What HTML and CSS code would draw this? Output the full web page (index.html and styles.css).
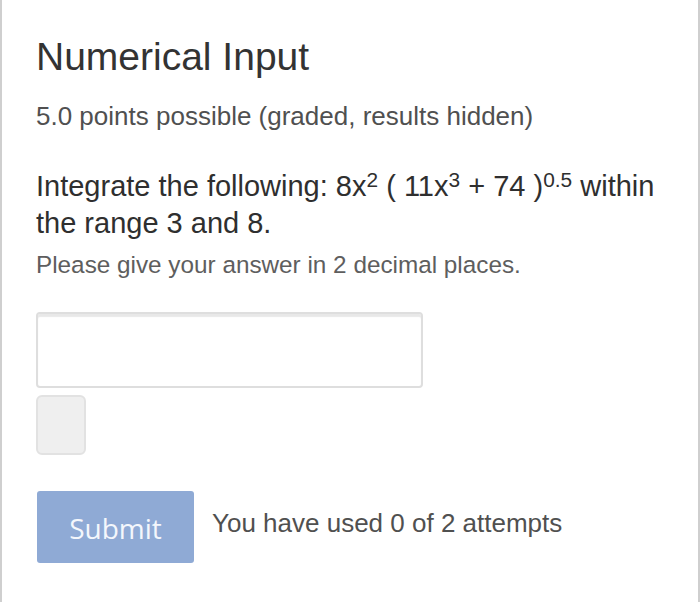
FILE: index.html
```html
<!DOCTYPE html>
<html lang="en">
<head>
<meta charset="utf-8">
<title>Numerical Input</title>
<link rel="stylesheet" href="styles.css">
</head>
<body>
<main class="problem">
  <h2 class="title">Numerical Input</h2>
  <div class="points">5.0 points possible (graded, results hidden)</div>
  <p class="question"><span>Integrate the following: 8x</span><sup>2</sup><span> ( 11x</span><sup>3</sup><span> + 74 )</span><sup>0.5</sup><span> within</span> <span>the range 3 and 8.</span></p>
  <p class="hint">Please give your answer in 2 decimal places.</p>
  <input class="answer" type="text" aria-label="Answer">
  <div class="status"></div>
  <div class="actions">
    <button class="submit" type="button">Submit</button>
    <span class="attempts">You have used 0 of 2 attempts</span>
  </div>
</main>
</body>
</html>
```

FILE: styles.css
```css
html, body {
  margin: 0;
  padding: 0;
  background: #ffffff;
}

.problem {
  box-sizing: border-box;
  min-height: 100vh;
  border-left: 2px solid #cfcfcf;
  border-right: 2px solid #cfcfcf;
  padding: 35px 34px 0 34px;
  font-family: "Liberation Sans", Arial, sans-serif;
  display: flex;
  flex-direction: column;
  align-items: flex-start;
}

.title {
  margin: 0;
  font-size: 39px;
  line-height: 44px;
  font-weight: normal;
  color: #333333;
}

.points {
  margin-top: 22px;
  font-size: 26px;
  line-height: 30px;
  color: #505050;
}

.question {
  margin: 37px 0 0 0;
  font-size: 29px;
  line-height: 37px;
  color: #2f2f2f;
}

.question sup {
  font-size: 0.72em;
  line-height: 16px;
  vertical-align: 0.42em;
}

.hint {
  margin: 8px 0 0 0;
  font-size: 24.3px;
  line-height: 30px;
  color: #5e5e5e;
}

.answer {
  box-sizing: border-box;
  margin: 32px 0 0 0;
  width: 387px;
  height: 76px;
  border: 2px solid #dedede;
  border-radius: 4px;
  box-shadow: inset 0 3px 1px rgba(0, 0, 0, 0.09);
  background: #ffffff;
  padding: 0 10px;
  font-size: 24px;
  outline: none;
}

.status {
  box-sizing: border-box;
  margin-top: 7px;
  width: 50px;
  height: 60px;
  background: #efefef;
  border: 2px solid #e2e2e2;
  border-radius: 6px;
}

.actions {
  margin-top: 36px;
  display: flex;
  align-items: flex-start;
  gap: 18px;
}

.submit {
  box-sizing: border-box;
  width: 157px;
  height: 72px;
  margin: 0 0 0 1px;
  padding: 21px 0 19px 0;
  border: none;
  border-radius: 3px;
  background: #8faad5;
  color: #f4f7fc;
  font-family: "Open Sans", sans-serif;
  font-size: 28px;
  line-height: 32px;
}

.attempts {
  margin-top: 17px;
  font-size: 26px;
  line-height: 30px;
  color: #505050;
}
```
